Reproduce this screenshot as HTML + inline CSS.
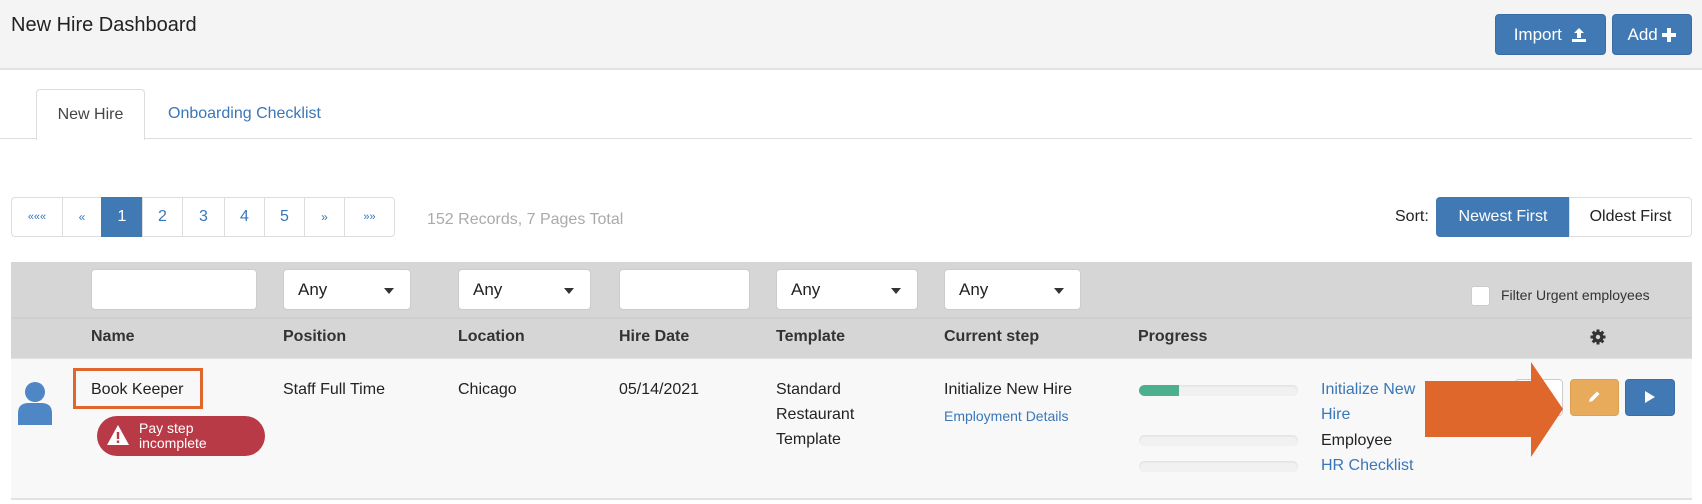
<!DOCTYPE html>
<html><head><meta charset="utf-8"><style>
*{box-sizing:border-box;margin:0;padding:0}
body{width:1702px;height:504px;background:#fff;font-family:"Liberation Sans",Arial,sans-serif;font-size:16px;color:#222;position:relative;overflow:hidden}
.a{position:absolute}
.hdr{left:0;top:0;width:1702px;height:70px;background:#f4f4f4;border-bottom:2px solid #e2e2e2}
.btn{position:absolute;background:#4179b4;color:#fff;border-radius:4px;display:flex;align-items:center;justify-content:center;font-size:17px;border:1px solid #3a6da3}
.pg{position:absolute;top:197px;height:40px;border:1px solid #ddd;display:flex;align-items:center;justify-content:center;color:#3a77b8;font-size:16px;background:#fff}
.sel{position:absolute;top:269px;height:41px;background:#fff;border-radius:4px;border:1px solid #ccc;padding-left:14px;display:flex;align-items:center;font-size:17px}
.sel .c{position:absolute;right:16px;top:18px;border-left:5px solid transparent;border-right:5px solid transparent;border-top:6px solid #333}
.th{position:absolute;top:328px;font-weight:bold;font-size:16px;color:#333}
.td{position:absolute;font-size:16px;color:#222}
.lnk{color:#3a77b8}
.bar{position:absolute;left:1139px;width:159px;height:11px;border-radius:6px;background:#f1f1f1;box-shadow:inset 0 1px 2px rgba(0,0,0,.08)}
</style></head><body>
<div class="a hdr"></div>
<div class="a" style="left:11px;top:14px;font-size:20px;color:#222">New Hire Dashboard</div>
<div class="btn" style="left:1495px;top:14px;width:111px;height:41px">Import&nbsp;&nbsp;<svg width="16" height="16" viewBox="0 0 16 16"><path d="M8 1 L13 6 H10 V11 H6 V6 H3 Z" fill="#fff"/><rect x="1" y="12" width="14" height="3" fill="#fff"/></svg></div>
<div class="btn" style="left:1612px;top:14px;width:80px;height:41px">Add&nbsp;<svg width="14" height="14" viewBox="0 0 14 14"><path d="M5 0H9V5H14V9H9V14H5V9H0V5H5Z" fill="#fff"/></svg></div>

<div class="a" style="left:0;top:138px;width:1692px;height:1px;background:#ddd"></div>
<div class="a" style="left:36px;top:89px;width:109px;height:51px;background:#fff;border:1px solid #ddd;border-bottom:none;border-radius:4px 4px 0 0;display:flex;align-items:center;justify-content:center;color:#444">New Hire</div>
<div class="a" style="left:168px;top:105px;color:#3a77b8">Onboarding Checklist</div>

<div class="pg" style="left:11px;width:52px;border-radius:4px 0 0 4px;font-size:11px">«««</div>
<div class="pg" style="left:62px;width:40px;font-size:12px">«</div>
<div class="pg" style="left:101px;width:42px;background:#4179b4;color:#fff;border-color:#4179b4">1</div>
<div class="pg" style="left:142px;width:41px">2</div>
<div class="pg" style="left:182px;width:43px">3</div>
<div class="pg" style="left:224px;width:41px">4</div>
<div class="pg" style="left:264px;width:41px">5</div>
<div class="pg" style="left:304px;width:41px;font-size:12px">»</div>
<div class="pg" style="left:344px;width:51px;border-radius:0 4px 4px 0;font-size:11px">»»</div>
<div class="a" style="left:427px;top:211px;color:#aaa;font-size:16px">152 Records, 7 Pages Total</div>

<div class="a" style="left:1395px;top:208px;color:#222">Sort:</div>
<div class="pg" style="left:1436px;width:134px;background:#4179b4;color:#fff;border-color:#4179b4;border-radius:4px 0 0 4px">Newest First</div>
<div class="pg" style="left:1569px;width:123px;color:#222;border-radius:0 4px 4px 0">Oldest First</div>

<div class="a" style="left:11px;top:262px;width:1681px;height:96px;background:#d6d6d6"></div>
<div class="a" style="left:11px;top:317px;width:1681px;height:2px;background:#cfcfcf"></div>
<div class="a" style="left:11px;top:358px;width:1681px;height:142px;background:#f8f8f8;border-top:1px solid #e2e2e2;border-bottom:2px solid #e2e2e2"></div>

<div class="sel" style="left:91px;width:166px"></div>
<div class="sel" style="left:283px;width:128px">Any<span class="c"></span></div>
<div class="sel" style="left:458px;width:133px">Any<span class="c"></span></div>
<div class="sel" style="left:619px;width:131px"></div>
<div class="sel" style="left:776px;width:142px">Any<span class="c"></span></div>
<div class="sel" style="left:944px;width:137px">Any<span class="c"></span></div>
<div class="a" style="left:1471px;top:286px;width:19px;height:20px;background:#fff;border-radius:3px;border:1px solid #ccc"></div>
<div class="a" style="left:1501px;top:287px;font-size:14px;color:#333">Filter Urgent employees</div>

<div class="th" style="left:91px">Name</div>
<div class="th" style="left:283px">Position</div>
<div class="th" style="left:458px">Location</div>
<div class="th" style="left:619px">Hire Date</div>
<div class="th" style="left:776px">Template</div>
<div class="th" style="left:944px">Current step</div>
<div class="th" style="left:1138px">Progress</div>
<svg class="a" style="left:1590px;top:329px" width="16" height="16" viewBox="0 0 16 16"><g fill="#333"><circle cx="8" cy="8" r="5.5"/><rect x="6.5" y="0.5" width="3" height="15"/><rect x="0.5" y="6.5" width="15" height="3"/><rect x="6.5" y="0.5" width="3" height="15" transform="rotate(45 8 8)"/><rect x="6.5" y="0.5" width="3" height="15" transform="rotate(-45 8 8)"/></g><circle cx="8" cy="8" r="2.2" fill="#d6d6d6"/></svg>

<svg class="a" style="left:17px;top:381px" width="36" height="44" viewBox="0 0 36 44"><circle cx="18" cy="11" r="10" fill="#4f86c6"/><path d="M1 44 V32 Q1 22 12 22 H24 Q35 22 35 32 V44 Z" fill="#4f86c6"/></svg>
<div class="a" style="left:73px;top:368px;width:130px;height:41px;border:3px solid #e0672b"></div>
<div class="td" style="left:91px;top:381px">Book Keeper</div>
<div class="a" style="left:97px;top:416px;width:168px;height:40px;background:#b83a46;border-radius:20px;color:#fff;font-size:14px;line-height:15px;padding:5px 0 0 42px">Pay step<br>incomplete</div>
<svg class="a" style="left:106px;top:424px" width="24" height="22" viewBox="0 0 24 22"><path d="M12 1 L23 21 H1 Z" fill="#fff"/><rect x="10.8" y="8" width="2.4" height="7" fill="#b83a46"/><rect x="10.8" y="16.5" width="2.4" height="2.4" fill="#b83a46"/></svg>

<div class="td" style="left:283px;top:381px">Staff Full Time</div>
<div class="td" style="left:458px;top:381px">Chicago</div>
<div class="td" style="left:619px;top:381px">05/14/2021</div>
<div class="td" style="left:776px;top:377px;line-height:25px">Standard<br>Restaurant<br>Template</div>
<div class="td" style="left:944px;top:381px">Initialize New Hire</div>
<div class="td lnk" style="left:944px;top:408px;font-size:14px">Employment Details</div>

<div class="bar" style="top:385px"></div>
<div class="a" style="left:1139px;top:385px;width:40px;height:11px;border-radius:6px 0 0 6px;background:#4caf8e"></div>
<div class="bar" style="top:435px"></div>
<div class="bar" style="top:461px"></div>
<div class="td lnk" style="left:1321px;top:377px;line-height:25px">Initialize New<br>Hire</div>
<div class="td" style="left:1321px;top:432px">Employee</div>
<div class="td lnk" style="left:1321px;top:457px">HR Checklist</div>

<div class="a" style="left:1515px;top:379px;width:48px;height:37px;background:#fff;border:1px solid #ccc;border-radius:4px"></div>
<div class="a" style="left:1570px;top:379px;width:49px;height:37px;background:#e8ab5c;border:1px solid #dca050;border-radius:4px"></div>
<svg class="a" style="left:1587px;top:390px" width="14" height="14" viewBox="0 0 14 14"><path d="M2 12 L3 8.5 L10 1.5 L12.5 4 L5.5 11 Z" fill="#fff"/></svg>
<div class="a" style="left:1625px;top:379px;width:50px;height:37px;background:#4179b4;border:1px solid #3a6da3;border-radius:4px"></div>
<svg class="a" style="left:1644px;top:390px" width="12" height="14" viewBox="0 0 12 14"><path d="M1 1 L11 7 L1 13 Z" fill="#fff"/></svg>

<svg class="a" style="left:1425px;top:362px" width="140" height="96" viewBox="0 0 140 96"><path d="M0 19 H106 V0 L138 47 L106 95 V75 H0 Z" fill="#e0672b"/></svg>
</body></html>
